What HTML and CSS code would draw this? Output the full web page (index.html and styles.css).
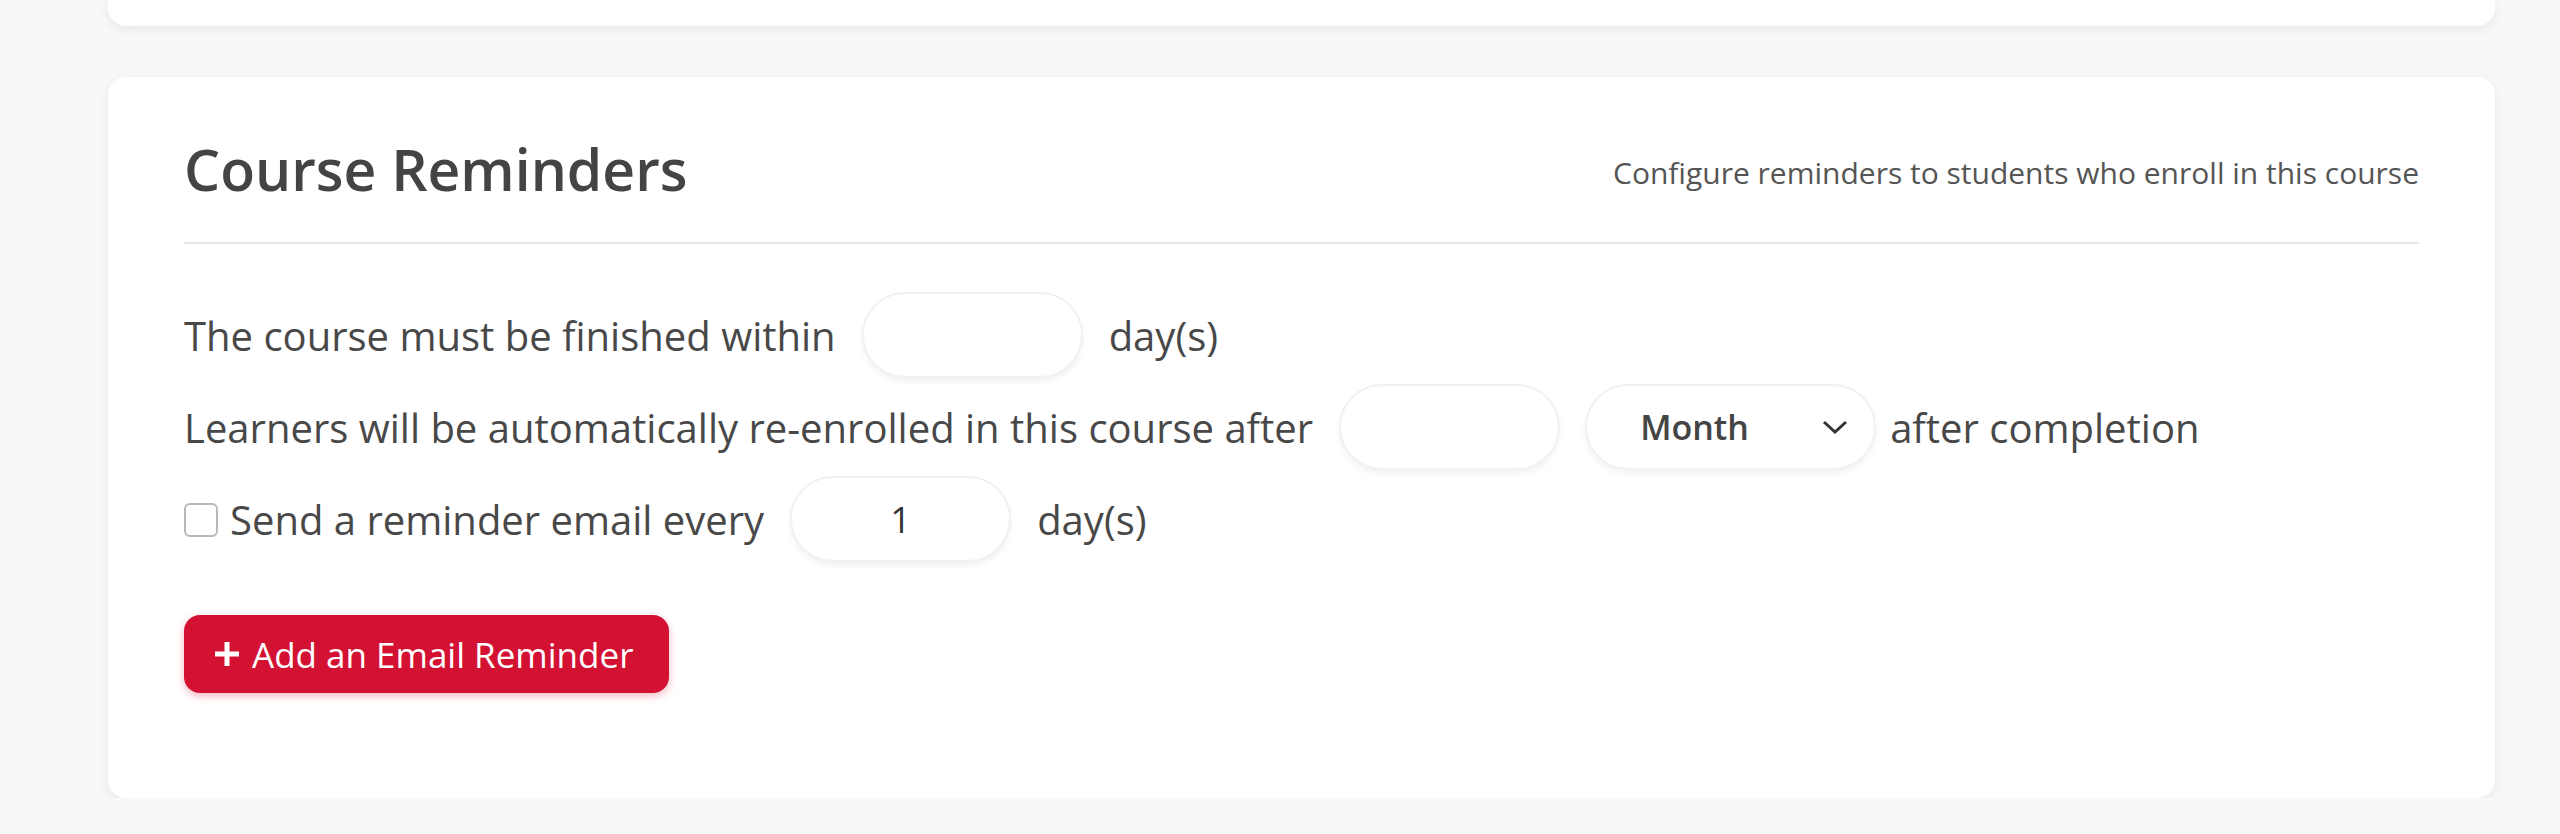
FILE: index.html
```html
<!DOCTYPE html>
<html>
    <head>
        <meta charset="utf-8">
        <meta name="viewport" content="width=device-width, initial-scale=1">
        <title>Course Reminders</title>
        <link rel="stylesheet" href="styles.css">
    </head>
    <body>
        <div class="page">
            <div class="card card-prev"></div>

            <div class="card">
                <div class="card-head">
                    <h2>Course Reminders</h2>
                    <span class="hint">Configure reminders to students who enroll in this course</span>
                </div>

                <div class="row">
                    <label>The course must be finished within</label>
                    <input class="field" type="text" value="">
                    <span>day(s)</span>
                </div>
                <div class="row">
                    <label>Learners will be automatically re-enrolled in this course after</label>
                    <input class="field" type="text" value="">
                    <div class="select">
                        <span>Month</span>
                        <svg width="26" height="16" viewBox="0 0 26 16"><polyline points="2,3 13,13 24,3" fill="none" stroke="#333" stroke-width="3"/></svg>
                    </div>
                    <span class="after">after completion</span>
                </div>
                <div class="row">
                    <label class="check"><input type="checkbox">Send a reminder email every</label>
                    <input class="field" type="text" value="1">
                    <span>day(s)</span>
                </div>

                <button class="btn-add">
                    <svg width="26" height="26" viewBox="0 0 26 26"><path d="M13 1v24M1 13h24" stroke="#fff" stroke-width="5"/></svg>
                    Add an Email Reminder
                </button>
            </div>
        </div>
    </body>
</html>
```

FILE: styles.css
```css
body {
    margin: 0;
    background: #f8f8f8;
    font-family: "Open Sans", "Liberation Sans", sans-serif;
    color: #484848;
}
.page {
    padding: 0 65px 0 108px;
}
.card {
    background: #fff;
    border-radius: 18px;
    box-shadow: 0 3px 12px rgba(0, 0, 0, 0.07);
    padding: 59px 76px 105px 76px;
    margin-bottom: 51px;
}
.card-prev {
    height: 26px;
    padding: 0;
    border-radius: 0 0 18px 18px;
}
.card-head {
    display: flex;
    justify-content: space-between;
    align-items: center;
    border-bottom: 2px solid #e6e6e6;
    padding-bottom: 39px;
    margin-bottom: 48px;
}
.card-head h2 {
    margin: 0;
    font-size: 57px;
    font-weight: 600;
    line-height: 67px;
    color: #444;
}
.hint {
    font-size: 30px;
    color: #555;
    padding-top: 6px;
}
.row {
    display: flex;
    align-items: center;
    font-size: 40px;
    margin-bottom: 6px;
}
.row label {
    margin-right: 26px;
}
.field {
    box-sizing: border-box;
    width: 221px;
    height: 86px;
    border: 2px solid #f1f1f1;
    border-radius: 43px;
    box-shadow: 0 4px 6px rgba(0, 0, 0, 0.05);
    font-family: inherit;
    font-size: 36px;
    color: #333;
    text-align: center;
    margin-right: 26px;
    outline: none;
}
.select {
    box-sizing: border-box;
    width: 291px;
    height: 86px;
    border: 2px solid #f1f1f1;
    border-radius: 43px;
    box-shadow: 0 4px 6px rgba(0, 0, 0, 0.05);
    display: flex;
    align-items: center;
    justify-content: space-between;
    padding: 0 26px 0 53px;
    font-size: 34px;
    font-weight: 600;
    color: #444;
    margin-left: -1px;
    margin-right: 14px;
}
.check {
    display: flex;
    align-items: center;
}
.check input {
    appearance: none;
    box-sizing: border-box;
    width: 34px;
    height: 34px;
    border: 2px solid #b8b8b8;
    border-radius: 6px;
    margin: 2px 12px 0 0;
    background: #fff;
}
.btn-add {
    margin-top: 53px;
    display: flex;
    align-items: center;
    gap: 12px;
    height: 78px;
    padding: 0 36px 0 30px;
    border: none;
    border-radius: 16px;
    background: #d31133;
    box-shadow: 0 3px 8px rgba(211, 17, 51, 0.3);
    color: #fff;
    font-family: inherit;
    font-size: 35px;
    font-weight: 500;
}
.card:last-child {
    margin-bottom: 0;
}
```
